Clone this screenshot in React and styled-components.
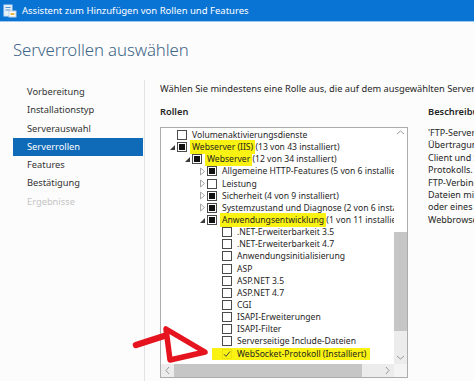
import React from "react";
import styled, { createGlobalStyle } from "styled-components";

const GlobalStyle = createGlobalStyle`
  html, body {
    margin: 0;
    padding: 0;
    background: #fcfcfc;
    overflow: hidden;
  }
  body {
    font-family: "Noto Sans", "Open Sans", sans-serif;
    color: #1e1e1e;
  }
`;

const Window = styled.div`
  width: 474px;
  height: 381px;
  overflow: hidden;
  background: #fcfcfc;
  display: flex;
  flex-direction: column;
`;

const TitleBar = styled.div`
  height: 21px;
  background: #0a74d4;
  border-bottom: 1px solid #9ec8ee;
  display: flex;
  align-items: center;
  padding-left: 3px;
  gap: 5px;
  flex-shrink: 0;
`;

const TitleText = styled.span`
  color: #ffffff;
  font-size: 9.5px;
  white-space: nowrap;
`;

const Heading = styled.h1`
  margin: 0;
  padding: 17px 0 0 13px;
  height: 43px;
  box-sizing: border-box;
  font-size: 16.8px;
  font-weight: 300;
  letter-spacing: -0.1px;
  color: #3f6688;
  white-space: nowrap;
  line-height: 22px;
`;

const Content = styled.div`
  display: flex;
  flex: 1;
  margin-top: 15px;
`;

const Nav = styled.ul`
  list-style: none;
  margin: 0;
  padding: 3px 0 0 13px;
  width: 145px;
  box-sizing: border-box;
  border-right: 1px solid #e3e3e3;
  flex-shrink: 0;
`;

const NavItem = styled.li`
  height: 18.3px;
  line-height: 18.3px;
  width: 130px;
  padding-left: 14px;
  box-sizing: border-box;
  font-size: 9.3px;
  white-space: nowrap;
  background: ${(p) => (p.active ? "#0f6ab8" : "transparent")};
  color: ${(p) => (p.active ? "#ffffff" : p.disabled ? "#c4c4c4" : "#333333")};
`;

const Main = styled.div`
  flex: 1;
  padding: 3px 0 0 15px;
  min-width: 0;
`;

const Intro = styled.div`
  font-size: 9.3px;
  line-height: 12px;
  white-space: nowrap;
  color: #262626;
`;

const Columns = styled.div`
  display: flex;
  margin-top: 11px;
`;

const RolesColumn = styled.div`
  width: 248px;
  flex-shrink: 0;
`;

const SectionLabel = styled.div`
  font-size: 9.3px;
  font-weight: 600;
  line-height: 12px;
  color: #262626;
  white-space: nowrap;
  margin-bottom: 9px;
`;

const TreeBox = styled.div`
  width: 248px;
  height: 251px;
  box-sizing: border-box;
  border: 1px solid #acacac;
  background: #ffffff;
  display: grid;
  grid-template-columns: 1fr 13px;
  grid-template-rows: 1fr 13px;
`;

const Rows = styled.div`
  overflow: hidden;
  padding-top: 1px;
`;

const Row = styled.div`
  height: 12.15px;
  display: flex;
  align-items: center;
  padding-left: ${(p) => 6 + (p.level - 1) * 15}px;
  white-space: nowrap;
  font-size: 8.6px;
`;

const ExpanderSlot = styled.span`
  width: 10px;
  height: 10px;
  display: flex;
  align-items: center;
  justify-content: center;
  flex-shrink: 0;
`;

const Item = styled.span`
  display: flex;
  align-items: center;
  height: 12px;
  background: ${(p) => (p.marked ? "#f9f213" : "transparent")};
  margin-left: ${(p) => (p.marked ? "-10px" : "0")};
  padding: ${(p) => (p.marked ? "0 4px 0 10px" : "0")};
`;

const Check = styled.span`
  width: 10px;
  height: 10px;
  box-sizing: border-box;
  border: 1px solid ${(p) => (p.state === "checked" ? "rgba(0,0,0,0.06)" : "#4a4a4a")};
  background: ${(p) => (p.state === "checked" ? "transparent" : "#ffffff")};
  display: flex;
  align-items: center;
  justify-content: center;
  margin-right: 5px;
  flex-shrink: 0;
`;

const PartialMark = styled.span`
  width: 6px;
  height: 6px;
  background: #111111;
`;

const Label = styled.span`
  color: #1e1e1e;
  line-height: 12px;
`;

const Mark = styled.span`
  background: #f9f213;
  padding: 1px 2px;
  margin: 0 -2px;
`;

const VScroll = styled.div`
  display: flex;
  flex-direction: column;
  background: #ffffff;
`;

const ScrollButton = styled.div`
  height: 13px;
  width: 13px;
  display: flex;
  align-items: center;
  justify-content: center;
  background: ${(p) => p.bg || "#ffffff"};
  flex-shrink: 0;
`;

const VTrackGap = styled.div`
  height: ${(p) => p.size}px;
  background: ${(p) => p.bg};
  flex-shrink: 0;
`;

const VThumb = styled.div`
  height: 99px;
  background: #c6c6c6;
  flex-shrink: 0;
`;

const VTrackRest = styled.div`
  flex: 1;
  background: #ececec;
`;

const HScroll = styled.div`
  display: flex;
  background: #ececec;
`;

const HThumb = styled.div`
  width: 188px;
  background: #c6c6c6;
  flex-shrink: 0;
`;

const HTrackRest = styled.div`
  flex: 1;
`;

const Corner = styled.div`
  background: #f4f4f4;
`;

const DescColumn = styled.div`
  margin-left: 20px;
  min-width: 0;
`;

const DescText = styled.div`
  font-size: 9px;
  line-height: 12.4px;
  color: #262626;
  white-space: nowrap;
  margin-top: 2px;
`;

const Orange = styled.span`
  background: #f5ae5e;
`;

const ArrowOverlay = styled.svg`
  position: absolute;
  left: 130px;
  top: 320px;
  overflow: visible;
`;

const Expander = ({ type }) => {
  if (type === "open")
    return (
      <svg width="7" height="7" viewBox="0 0 7 7">
        <polygon points="6,1 6,6 1,6" fill="#3a3a3a" />
      </svg>
    );
  if (type === "closed")
    return (
      <svg width="7" height="9" viewBox="0 0 7 9">
        <polygon points="1.5,1 5.5,4.5 1.5,8" fill="none" stroke="#a6a6a6" strokeWidth="1" />
      </svg>
    );
  return null;
};

const Chevron = ({ dir }) => {
  const paths = {
    up: "M3 6 L6.5 3 L10 6",
    down: "M3 5 L6.5 8 L10 5",
    left: "M8 3 L5 6.5 L8 10",
    right: "M5 3 L8 6.5 L5 10",
  };
  return (
    <svg width="13" height="13" viewBox="0 0 13 13">
      <path d={paths[dir]} fill="none" stroke="#9a9a9a" strokeWidth="1" />
    </svg>
  );
};

const AppIcon = () => (
  <svg width="14" height="14" viewBox="0 0 14 14">
    <rect x="1" y="1" width="8" height="11" fill="#e8f1fa" stroke="#cfe0f1" />
    <rect x="2.5" y="3" width="5" height="1" fill="#4f8fcf" />
    <rect x="2.5" y="5.5" width="5" height="1" fill="#4f8fcf" />
    <rect x="6" y="7" width="7" height="6" fill="#ffffff" stroke="#b9cfe4" />
    <rect x="7.5" y="9" width="4" height="2" fill="#e8b54a" />
  </svg>
);

const tree = [
  { level: 1, state: "empty", name: "Volumenaktivierungsdienste" },
  { level: 1, exp: "open", state: "partial", name: "Webserver (IIS)", count: "(13 von 43 installiert)", mark: "name" },
  { level: 2, exp: "open", state: "partial", name: "Webserver", count: "(12 von 34 installiert)", mark: "name" },
  { level: 3, exp: "closed", state: "partial", name: "Allgemeine HTTP-Features", count: "(5 von 6 installiert)" },
  { level: 3, exp: "closed", state: "empty", name: "Leistung" },
  { level: 3, exp: "closed", state: "partial", name: "Sicherheit", count: "(4 von 9 installiert)" },
  { level: 3, exp: "closed", state: "partial", name: "Systemzustand und Diagnose", count: "(2 von 6 installiert)" },
  { level: 3, exp: "open", state: "partial", name: "Anwendungsentwicklung", count: "(1 von 11 installiert)", mark: "name" },
  { level: 4, state: "empty", name: ".NET-Erweiterbarkeit 3.5" },
  { level: 4, state: "empty", name: ".NET-Erweiterbarkeit 4.7" },
  { level: 4, state: "empty", name: "Anwendungsinitialisierung" },
  { level: 4, state: "empty", name: "ASP" },
  { level: 4, state: "empty", name: "ASP.NET 3.5" },
  { level: 4, state: "empty", name: "ASP.NET 4.7" },
  { level: 4, state: "empty", name: "CGI" },
  { level: 4, state: "empty", name: "ISAPI-Erweiterungen" },
  { level: 4, state: "empty", name: "ISAPI-Filter" },
  { level: 4, state: "empty", name: "Serverseitige Include-Dateien" },
  { level: 4, state: "checked", name: "WebSocket-Protokoll (Installiert)", mark: "all" },
];

const steps = [
  "Vorbereitung",
  "Installationstyp",
  "Serverauswahl",
  "Serverrollen",
  "Features",
  "Bestätigung",
  "Ergebnisse",
];

const TreeRow = ({ row }) => (
  <Row level={row.level}>
    <ExpanderSlot>
      <Expander type={row.exp} />
    </ExpanderSlot>
    <Item marked={row.mark === "all"}>
      <Check state={row.state}>
        {row.state === "partial" && <PartialMark />}
        {row.state === "checked" && (
          <svg width="8" height="8" viewBox="0 0 8 8">
            <path d="M1 4.2 L3 6.3 L7 1.5" fill="none" stroke="#444" strokeWidth="1" />
          </svg>
        )}
      </Check>
      <Label>
        {row.mark === "name" ? <Mark>{row.name}</Mark> : row.name}
        {row.count && " " + row.count}
      </Label>
    </Item>
  </Row>
);

export default function App() {
  return (
    <Window>
      <GlobalStyle />
      <TitleBar>
        <AppIcon />
        <TitleText>Assistent zum Hinzufügen von Rollen und Features</TitleText>
      </TitleBar>
      <Heading>Serverrollen auswählen</Heading>
      <Content>
        <Nav>
          {steps.map((s) => (
            <NavItem key={s} active={s === "Serverrollen"} disabled={s === "Ergebnisse"}>
              {s}
            </NavItem>
          ))}
        </Nav>
        <Main>
          <Intro>
            Wählen Sie mindestens eine Rolle aus, die auf dem ausgewählten Server installiert werden soll.
          </Intro>
          <Columns>
            <RolesColumn>
              <SectionLabel>Rollen</SectionLabel>
              <TreeBox>
                <Rows>
                  {tree.map((r) => (
                    <TreeRow key={r.name} row={r} />
                  ))}
                </Rows>
                <VScroll>
                  <ScrollButton>
                    <Chevron dir="up" />
                  </ScrollButton>
                  <VTrackGap size={91} bg="#ffffff" />
                  <VThumb />
                  <VTrackRest />
                  <ScrollButton bg="#ececec">
                    <Chevron dir="down" />
                  </ScrollButton>
                </VScroll>
                <HScroll>
                  <ScrollButton bg="#ececec">
                    <Chevron dir="left" />
                  </ScrollButton>
                  <HThumb />
                  <HTrackRest />
                  <ScrollButton bg="#ececec">
                    <Chevron dir="right" />
                  </ScrollButton>
                </HScroll>
                <Corner />
              </TreeBox>
            </RolesColumn>
            <DescColumn>
              <SectionLabel>Beschreibung</SectionLabel>
              <DescText>
                'FTP-Server' ermöglicht die
                <br />
                Übertragung von Dateien zwischen
                <br />
                Client und Server mithilfe des FTP-
                <br />
                Protokolls. <Orange>Benutzer</Orange> können eine
                <br />
                FTP-Verbindung herstellen und
                <br />
                Dateien mit einem FTP-Client
                <br />
                oder eines <Orange>FTP-fähigen</Orange>
                <br />
                Webbrowsers übertragen.
              </DescText>
            </DescColumn>
          </Columns>
        </Main>
      </Content>
      <ArrowOverlay width="90" height="50" viewBox="130 320 90 50">
        <path d="M136 345 L164 336" stroke="#e5141f" strokeWidth="6.5" strokeLinecap="round" fill="none" />
        <path
          d="M166 329 L170 360 L205 352 Z"
          stroke="#e5141f"
          strokeWidth="5.5"
          strokeLinejoin="round"
          fill="#ffffff"
        />
      </ArrowOverlay>
    </Window>
  );
}
